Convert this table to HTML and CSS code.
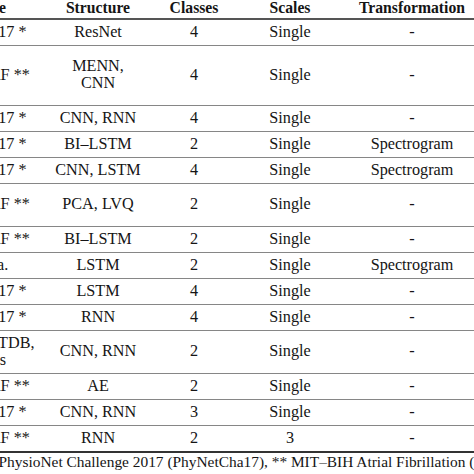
FILE: index.html
```html
<!DOCTYPE html>
<html lang="en">
<head>
<meta charset="utf-8">
<title>Table</title>
<link rel="stylesheet" href="styles.css">
</head>
<body>
<div class="page">
  <table class="data">
    <colgroup>
      <col class="c-ref"><col class="c-db"><col class="c-struct"><col class="c-cls"><col class="c-scl"><col class="c-tr">
    </colgroup>
    <thead>
      <tr><th>Reference</th><th>Database</th><th>Structure</th><th>Classes</th><th>Scales</th><th class="last">Transformation</th></tr>
    </thead>
    <tbody>
      <tr><td>[21]</td><td>PhyNetCha17 *</td><td>ResNet</td><td>4</td><td>Single</td><td class="last">-</td></tr>
      <tr><td>Andersen<br>et al.<br>[22]</td><td>MIT–BIH AF **</td><td>MENN,<br>CNN</td><td>4</td><td>Single</td><td class="last">-</td></tr>
      <tr><td>[23]</td><td>PhyNetCha17 *</td><td>CNN, RNN</td><td>4</td><td>Single</td><td class="last">-</td></tr>
      <tr><td>[24]</td><td>PhyNetCha17 *</td><td>BI–LSTM</td><td>2</td><td>Single</td><td class="last">Spectrogram</td></tr>
      <tr><td>[25]</td><td>PhyNetCha17 *</td><td>CNN, LSTM</td><td>4</td><td>Single</td><td class="last">Spectrogram</td></tr>
      <tr><td>Xia et al.<br>[26]</td><td>MIT–BIH AF **</td><td>PCA, LVQ</td><td>2</td><td>Single</td><td class="last">-</td></tr>
      <tr><td>[27]</td><td>MIT–BIH AF **</td><td>BI–LSTM</td><td>2</td><td>Single</td><td class="last">-</td></tr>
      <tr><td>[28]</td><td>Own data.</td><td>LSTM</td><td>2</td><td>Single</td><td class="last">Spectrogram</td></tr>
      <tr><td>[29]</td><td>PhyNetCha17 *</td><td>LSTM</td><td>4</td><td>Single</td><td class="last">-</td></tr>
      <tr><td>[30]</td><td>PhyNetCha17 *</td><td>RNN</td><td>4</td><td>Single</td><td class="last">-</td></tr>
      <tr><td>[31]</td><td>MIT–BIH LTDB,<br>databases</td><td>CNN, RNN</td><td>2</td><td>Single</td><td class="last">-</td></tr>
      <tr><td>[32]</td><td>MIT–BIH AF **</td><td>AE</td><td>2</td><td>Single</td><td class="last">-</td></tr>
      <tr><td>[33]</td><td>PhyNetCha17 *</td><td>CNN, RNN</td><td>3</td><td>Single</td><td class="last">-</td></tr>
      <tr class="end"><td>Ours</td><td>MIT–BIH AF **</td><td>RNN</td><td>2</td><td>3</td><td class="last">-</td></tr>
    </tbody>
  </table>
  <p class="note">* PhysioNet Challenge 2017 (PhyNetCha17), ** MIT–BIH Atrial Fibrillation (AFDB).</p>
</div>
</body>
</html>
```
FILE: styles.css
```css
html, body {
  margin: 0;
  padding: 0;
  overflow: hidden;
  background: #ffffff;
}
.page {
  width: 474px;
  height: 474px;
  overflow: hidden;
  font-family: "Liberation Serif", "Times New Roman", serif;
  color: #151515;
}
.data {
  border-collapse: collapse;
  table-layout: fixed;
  width: 674px;
  margin-left: -200px;
  margin-top: -9px;
}
.c-ref { width: 120px; }
.c-db { width: 110px; }
.c-struct { width: 136px; }
.c-cls { width: 56px; }
.c-scl { width: 136px; }
.c-tr { width: 116px; }
.data th, .data td {
  padding: 4px 0;
  text-align: center;
  vertical-align: middle;
  white-space: nowrap;
  line-height: 17px;
}
.data th {
  padding: 7.6px 0 2px;
  font-size: 15.7px;
  font-weight: bold;
  border-bottom: 2px solid #555555;
}
.data td {
  font-size: 16.2px;
  border-bottom: 1.4px solid #868686;
}
.data .last {
  padding-right: 8px;
}
.data tr.end td {
  border-bottom: 2.4px solid #333333;
}
.note {
  margin: 0 0 0 -13px;
  font-size: 15.4px;
  line-height: 17px;
  white-space: nowrap;
}
```
